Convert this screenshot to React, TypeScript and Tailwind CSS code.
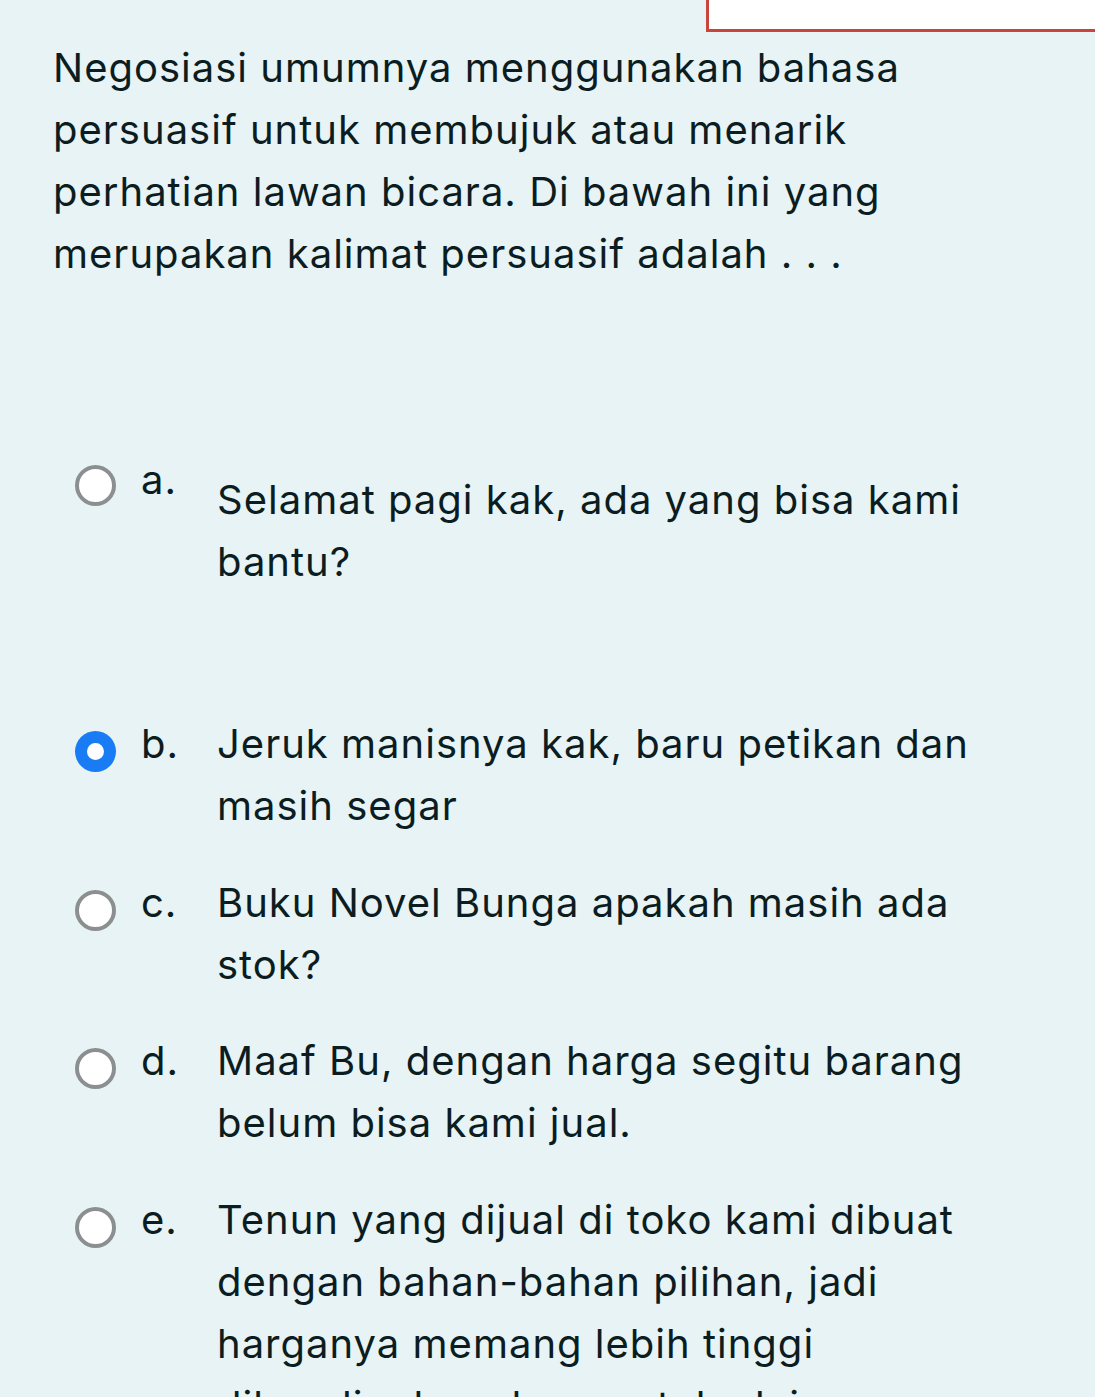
const options = [
  {
    key: "a",
    lines: ["Selamat pagi kak, ada yang bisa kami", "bantu?"],
    selected: false,
    gap: "mt-[184px]",
  },
  {
    key: "b",
    lines: ["Jeruk manisnya kak, baru petikan dan", "masih segar"],
    selected: true,
    gap: "mt-[120px]",
  },
  {
    key: "c",
    lines: ["Buku Novel Bunga apakah masih ada", "stok?"],
    selected: false,
    gap: "mt-[35px]",
  },
  {
    key: "d",
    lines: ["Maaf Bu, dengan harga segitu barang", "belum bisa kami jual."],
    selected: false,
    gap: "mt-[34px]",
  },
  {
    key: "e",
    lines: [
      "Tenun yang dijual di toko kami dibuat",
      "dengan bahan-bahan pilihan, jadi",
      "harganya memang lebih tinggi",
      "dibandingkan dengan toko lainnya.",
    ],
    selected: false,
    gap: "mt-[35px]",
  },
];

function Radio({ selected }: { selected: boolean }) {
  if (selected) {
    return (
      <div className="flex h-[41px] w-[41px] items-center justify-center rounded-full bg-[#1a7cf4]">
        <div className="h-[17px] w-[17px] rounded-full bg-white" />
      </div>
    );
  }
  return <div className="h-[41px] w-[41px] rounded-full border-[4px] border-[#8c8f90] bg-white" />;
}

export default function App() {
  return (
    <div className="h-[1397px] w-[1095px] overflow-hidden bg-[#e8f3f5] font-['Inter',sans-serif] text-[40px] leading-[62px] tracking-[1px] text-[#0c1d21]">
      <div className="ml-[706px] h-[32px] border-b-[3px] border-l-[3px] border-[#c9443a] bg-white" />

      <p className="ml-[53px] mt-[5px]">
        Negosiasi umumnya menggunakan bahasa
        <br />
        persuasif untuk membujuk atau menarik
        <br />
        perhatian lawan bicara. Di bawah ini yang
        <br />
        merupakan kalimat persuasif adalah . . .
      </p>

      {options.map((opt) => {
        const first = opt.key === "a";
        return (
          <div key={opt.key} className={`flex items-start ${opt.gap}`}>
            <div className={`ml-[75px] ${first ? "mt-[-4px]" : "mt-[18px]"}`}>
              <Radio selected={opt.selected} />
            </div>
            <div className={`ml-[25px] w-[76px] ${first ? "mt-[-20px]" : ""}`}>{opt.key}.</div>
            <div>
              {opt.lines.map((line) => (
                <div key={line}>{line}</div>
              ))}
            </div>
          </div>
        );
      })}
    </div>
  );
}
